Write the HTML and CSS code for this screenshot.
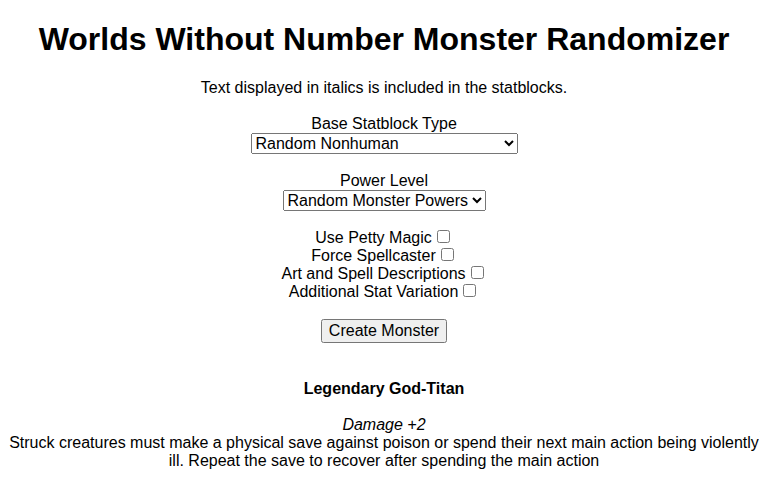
FILE: index.html
```html
<!doctype html>
<html>
<head>
    <meta charset="utf-8">
    <title>Worlds Without Number Monster Randomizer</title>
    <link rel="stylesheet" href="styles.css">
</head>
<body class="wwn-body">
    <h1 class="wwn-title">Worlds Without Number Monster Randomizer</h1>

    <form id="monster-form" class="wwn-form" action="#">
        Text displayed in italics is included in the statblocks.<br><br>

        <label for="base-type">Base Statblock Type</label><br>
        <select id="base-type" class="wwn-select-base">
            <option>Random Nonhuman</option>
            <option>Random Human</option>
            <option>Beast</option>
            <option>Undead</option>
        </select><br><br>

        <label for="power-level">Power Level</label><br>
        <select id="power-level">
            <option>Random Monster Powers</option>
            <option>No Powers</option>
        </select><br><br>

        <label for="petty-magic">Use Petty Magic</label><input type="checkbox" id="petty-magic"><br>
        <label for="force-caster">Force Spellcaster</label><input type="checkbox" id="force-caster"><br>
        <label for="descriptions">Art and Spell Descriptions</label><input type="checkbox" id="descriptions"><br>
        <label for="stat-variation">Additional Stat Variation</label><input type="checkbox" id="stat-variation"><br><br>

        <input type="submit" value="Create Monster">
    </form>

    <div id="monster-output" class="wwn-output">
        <b>Legendary God-Titan</b><br><br>
        <i>Damage +2</i><br>
        Struck creatures must make a physical save against poison or spend their next main action being violently ill. Repeat the save to recover after spending the main action
    </div>
</body>
</html>
```
FILE: styles.css
```css
.wwn-body {
    font-family: "Liberation Sans", Arial, sans-serif;
    text-align: center;
}

.wwn-title {
    font-size: 32px;
    margin-top: 13px;
}

.wwn-form select,
.wwn-form input[type="submit"] {
    font-family: "Liberation Sans", Arial, sans-serif;
    font-size: 16px;
}

/* keep the checkboxes inside a normal text line */
.wwn-form input[type="checkbox"] {
    margin: 0 3px 0 5px;
}

.wwn-select-base {
    width: 267px;
}

.wwn-output {
    margin-top: 2.3em;
}
```
